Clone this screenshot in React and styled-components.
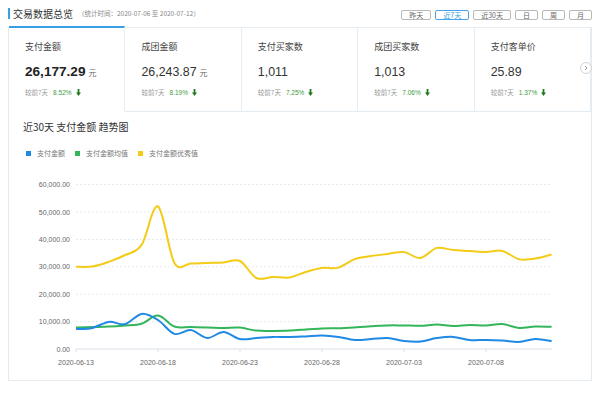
import styled, { createGlobalStyle } from "styled-components";

const GlobalStyle = createGlobalStyle`
  html, body {
    margin: 0;
    padding: 0;
    background: #ffffff;
  }
  body {
    font-family: "Liberation Sans", "Noto Sans CJK SC", sans-serif;
  }
`;

const CJK = `"Noto Sans CJK SC", "Liberation Sans", sans-serif`;
const NUM = `"Liberation Sans", "Noto Sans CJK SC", sans-serif`;

const Page = styled.div`
  width: 600px;
  height: 396px;
  box-sizing: border-box;
  padding: 8px 8px 0;
`;

const HeaderRow = styled.div`
  display: flex;
  justify-content: space-between;
  align-items: flex-start;
  height: 19px;
`;

const TitleBlock = styled.div`
  display: flex;
  align-items: center;
  border-left: 2px solid #3a9fe4;
  padding-left: 3px;
  height: 11px;
`;

const Title = styled.span`
  font-family: ${CJK};
  font-size: 10px;
  line-height: 11px;
  color: #333;
`;

const SubTitle = styled.span`
  font-family: ${CJK};
  font-size: 6.5px;
  line-height: 11px;
  color: #888;
  margin-left: 5px;
`;

const RangeGroup = styled.div`
  display: flex;
  gap: 4px;
  padding-top: 2px;
`;

const RangeButton = styled.div`
  height: 10px;
  box-sizing: border-box;
  padding: 0 7px;
  border: 1px solid ${(p) => (p.$active ? "#4aa3e6" : "#b8b8b8")};
  border-radius: 2px;
  font-family: ${CJK};
  font-size: 7px;
  line-height: 8px;
  color: ${(p) => (p.$active ? "#3a9fe4" : "#666")};
`;

const Panel = styled.div`
  border-left: 1px solid #e3ebf1;
  border-right: 1px solid #e3ebf1;
  border-bottom: 1px solid #e3ebf1;
  height: 354px;
  box-sizing: border-box;
`;

const CardRow = styled.div`
  display: flex;
  height: 85px;
  position: relative;
`;

const Card = styled.div`
  flex: 1;
  box-sizing: border-box;
  padding: 13px 0 0 16px;
  border-top: ${(p) => (p.$active ? "2px solid #3a9fe4" : "1px solid #e6edf2")};
  border-bottom: ${(p) => (p.$active ? "1px solid transparent" : "1px solid #e3ebf1")};
  border-right: 1px solid #e6edf2;
  margin-top: ${(p) => (p.$active ? "-1px" : "0")};
  &:last-child {
    border-right: none;
  }
`;

const CardLabel = styled.div`
  font-family: ${CJK};
  font-size: 9px;
  line-height: 12px;
  color: #444;
`;

const CardValue = styled.div`
  margin-top: 10px;
  display: flex;
  align-items: baseline;
  height: 18px;
  font-family: ${NUM};
  font-size: ${(p) => (p.$active ? "13.6px" : "12.4px")};
  font-weight: ${(p) => (p.$active ? "bold" : "normal")};
  color: ${(p) => (p.$active ? "#222" : "#333")};
  line-height: 18px;
`;

const Unit = styled.span`
  font-family: ${CJK};
  font-size: 8px;
  font-weight: normal;
  color: #666;
  margin-left: 3px;
`;

const Compare = styled.div`
  margin-top: 6px;
  display: flex;
  align-items: center;
  height: 10px;
  font-family: ${CJK};
  font-size: 6.5px;
  color: #999;
`;

const Percent = styled.span`
  font-family: ${NUM};
  color: #3e9a3e;
  margin-left: 5px;
  margin-right: 4px;
`;

const NextButton = styled.div`
  position: absolute;
  right: -1px;
  top: 35px;
  width: 12px;
  height: 12px;
  box-sizing: border-box;
  border: 1px solid #d4d4d4;
  border-radius: 50%;
  background: #fff;
  display: flex;
  align-items: center;
  justify-content: center;
`;

const ChartSection = styled.div`
  padding-top: 9px;
`;

const ChartTitle = styled.div`
  padding-left: 14px;
  font-family: ${CJK};
  font-size: 10px;
  line-height: 12px;
  color: #333;
`;

const Legend = styled.div`
  display: flex;
  align-items: center;
  padding-left: 17px;
  margin-top: 16px;
  height: 8px;
`;

const LegendItem = styled.div`
  display: flex;
  align-items: center;
  margin-right: 10px;
  font-family: ${CJK};
  font-size: 7px;
  color: #777;
`;

const Swatch = styled.span`
  width: 5px;
  height: 5px;
  background: ${(p) => p.$color};
  margin-right: 6px;
`;

const ChartSvg = styled.svg`
  display: block;
  margin-top: 8px;
`;

const BLUE = "#2089e3";
const GREEN = "#33b55a";
const YELLOW = "#f4cb16";

const cards = [
  { label: "支付金额", value: "26,177.29", unit: "元", pct: "8.52%", active: true },
  { label: "成团金额", value: "26,243.87", unit: "元", pct: "8.19%" },
  { label: "支付买家数", value: "1,011", pct: "7.25%" },
  { label: "成团买家数", value: "1,013", pct: "7.06%" },
  { label: "支付客单价", value: "25.89", pct: "1.37%" },
];

const ranges = [
  { text: "昨天" },
  { text: "近7天", active: true },
  { text: "近30天" },
  { text: "日" },
  { text: "周" },
  { text: "月" },
];

// values in thousands, one per day 06-13 .. 07-12
const payAmount = [
  7.3, 7.7, 9.9, 9.1, 12.8, 10.6, 5.5, 6.9, 4.0, 6.2, 3.6, 4.0, 4.4, 4.4, 4.6,
  4.9, 4.4, 3.3, 3.6, 4.0, 2.9, 2.7, 4.0, 4.4, 3.3, 3.3, 3.1, 2.6, 3.6, 2.9,
];
const payAvg = [
  7.8, 8.0, 8.2, 8.6, 9.2, 12.2, 8.2, 8.0, 7.9, 7.7, 7.8, 6.7, 6.6, 6.7, 7.1,
  7.5, 7.6, 7.9, 8.3, 8.6, 8.6, 8.5, 8.9, 8.4, 8.8, 8.6, 9.1, 7.7, 8.2, 8.1,
];
const payBest = [
  30.0, 30.1, 31.8, 34.3, 38.0, 52.0, 31.4, 31.2, 31.4, 31.6, 32.1, 25.9, 26.3,
  26.1, 28.1, 29.6, 29.7, 32.8, 33.9, 34.7, 35.4, 33.2, 36.9, 36.1, 35.8, 35.4,
  35.8, 32.8, 33.0, 34.5,
];

const X0 = 67;
const STEP = 16.4;
const Y0 = 184;
const PER_K = 2.74;
const X_END = X0 + STEP * 29;

const px = (i) => X0 + i * STEP;
const py = (v) => Y0 - v * PER_K;

function smoothPath(data) {
  const pts = data.map((v, i) => [px(i), py(v)]);
  let d = `M${pts[0][0].toFixed(1)},${pts[0][1].toFixed(1)}`;
  for (let i = 0; i < pts.length - 1; i++) {
    const p0 = pts[i - 1] || pts[i];
    const p1 = pts[i];
    const p2 = pts[i + 1];
    const p3 = pts[i + 2] || p2;
    const c1x = p1[0] + (p2[0] - p0[0]) / 6;
    const c1y = p1[1] + (p2[1] - p0[1]) / 6;
    const c2x = p2[0] - (p3[0] - p1[0]) / 6;
    const c2y = p2[1] - (p3[1] - p1[1]) / 6;
    d += ` C${c1x.toFixed(1)},${c1y.toFixed(1)} ${c2x.toFixed(1)},${c2y.toFixed(1)} ${p2[0].toFixed(1)},${p2[1].toFixed(1)}`;
  }
  return d;
}

// ticks in ten-thousands
const yTicks = [0, 1, 2, 3, 4, 5, 6];
const xTicks = [
  { i: 0, label: "2020-06-13" },
  { i: 5, label: "2020-06-18" },
  { i: 10, label: "2020-06-23" },
  { i: 15, label: "2020-06-28" },
  { i: 20, label: "2020-07-03" },
  { i: 25, label: "2020-07-08" },
];

function DownArrow() {
  return (
    <svg width="5" height="7" viewBox="0 0 5 7">
      <rect x="1.6" y="0" width="1.8" height="4" fill="#1f7a1f" />
      <polygon points="0,3.5 5,3.5 2.5,7" fill="#1f7a1f" />
    </svg>
  );
}

function TrendChart() {
  return (
    <ChartSvg width="582" height="210" viewBox="0 0 582 210">
      {yTicks.map((t) => {
        const y = py(t * 10);
        return (
          <g key={t}>
            {t > 0 && (
              <line
                x1={X0}
                x2={X_END}
                y1={y}
                y2={y}
                stroke="#e6eaee"
                strokeWidth="1"
                strokeDasharray="2 2"
              />
            )}
            <text
              x="61"
              y={y + 2.5}
              textAnchor="end"
              fontSize="7"
              fill="#666"
              fontFamily={NUM}
            >
              {t === 0 ? "0.00" : `${t}0,000.00`}
            </text>
          </g>
        );
      })}
      <line x1={X0} x2={X_END} y1={Y0} y2={Y0} stroke="#d9e1e8" strokeWidth="1" />
      {xTicks.map((t) => (
        <g key={t.label}>
          <line x1={px(t.i)} x2={px(t.i)} y1={Y0} y2={Y0 + 3} stroke="#d9e1e8" />
          <text
            x={px(t.i)}
            y="200"
            textAnchor="middle"
            fontSize="7"
            fill="#666"
            fontFamily={NUM}
          >
            {t.label}
          </text>
        </g>
      ))}
      <path d={smoothPath(payBest)} fill="none" stroke={YELLOW} strokeWidth="2" />
      <path d={smoothPath(payAvg)} fill="none" stroke={GREEN} strokeWidth="2" />
      <path d={smoothPath(payAmount)} fill="none" stroke={BLUE} strokeWidth="2" />
    </ChartSvg>
  );
}

export default function App() {
  return (
    <Page>
      <GlobalStyle />
      <HeaderRow>
        <TitleBlock>
          <Title>交易数据总览</Title>
          <SubTitle>（统计时间：2020-07-06 至 2020-07-12）</SubTitle>
        </TitleBlock>
        <RangeGroup>
          {ranges.map((r) => (
            <RangeButton key={r.text} $active={r.active}>
              {r.text}
            </RangeButton>
          ))}
        </RangeGroup>
      </HeaderRow>

      <Panel>
        <CardRow>
          {cards.map((c) => (
            <Card key={c.label} $active={c.active}>
              <CardLabel>{c.label}</CardLabel>
              <CardValue $active={c.active}>
                {c.value}
                {c.unit && <Unit>{c.unit}</Unit>}
              </CardValue>
              <Compare>
                较前7天
                <Percent>{c.pct}</Percent>
                <DownArrow />
              </Compare>
            </Card>
          ))}
          <NextButton>
            <svg width="6" height="6" viewBox="0 0 6 6">
              <polyline points="2,1 4,3 2,5" fill="none" stroke="#999" strokeWidth="1" />
            </svg>
          </NextButton>
        </CardRow>

        <ChartSection>
          <ChartTitle>近30天 支付金额 趋势图</ChartTitle>
          <Legend>
            <LegendItem>
              <Swatch $color={BLUE} />
              支付金额
            </LegendItem>
            <LegendItem>
              <Swatch $color={GREEN} />
              支付金额均值
            </LegendItem>
            <LegendItem>
              <Swatch $color={YELLOW} />
              支付金额优秀值
            </LegendItem>
          </Legend>
          <TrendChart />
        </ChartSection>
      </Panel>
    </Page>
  );
}
